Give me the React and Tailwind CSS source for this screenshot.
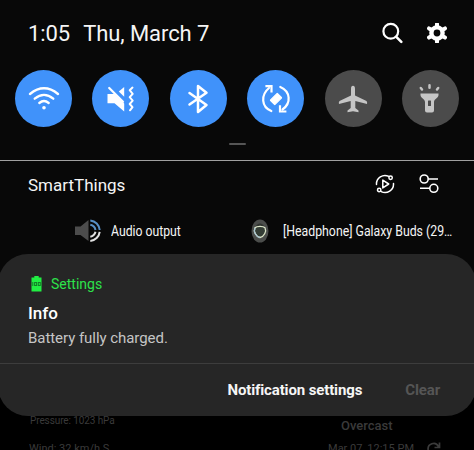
const WifiIcon = () => (
  <svg width="32" height="26" viewBox="0 0 32 26" fill="none" stroke="white" strokeWidth="2.3" strokeLinecap="round">
    <path d="M2 8Q16 -3.4 30 8" />
    <path d="M6.7 12.7Q16 5 25.3 12.7" />
    <path d="M11.3 17Q16 13 20.7 17" />
    <circle cx="16" cy="21.7" r="1.8" fill="white" stroke="none" />
  </svg>
)

const VibrateIcon = () => (
  <svg width="30" height="28" viewBox="0 0 30 28" fill="none">
    <path d="M1.5 9H8.5L18.2 18.6V26.4L8.5 18.2H1.5Z" fill="white" />
    <path d="M12.8 6.6L18.2 2V11.8Z" fill="white" />
    <path d="M3.2 3L17 16.8" stroke="white" strokeWidth="2.2" strokeLinecap="round" />
    <path d="M26.5 2.6L23.7 5.2L26.7 8.8L23.7 12.2L26.7 15.6L23.7 19L26.5 22.2L24 25.3" stroke="white" strokeWidth="2" strokeLinecap="round" strokeLinejoin="round" />
  </svg>
)

const BluetoothIcon = () => (
  <svg width="22" height="30" viewBox="0 0 22 30" fill="none" stroke="white" strokeWidth="2.5" strokeLinecap="round" strokeLinejoin="round">
    <path d="M2.500 9L19.500 21L11 28V2L19.500 8.700L2.500 20.500" />
  </svg>
)

const RotateIcon = () => (
  <svg width="30" height="30" viewBox="0 0 30 30" fill="none" stroke="white" strokeWidth="2.200">
    <path d="M10.300 27C.2 23 -.4 11 8 4" strokeLinecap="round" />
    <path d="M19.300 3C29.500 7.500 30.500 19 21.500 25.500" strokeLinecap="round" />
    <path d="M5.500 2.200H10.500V7.500M24.300 27.500H19V22.300" strokeLinecap="square" />
    <rect x="10" y="11.800" width="10" height="6.400" rx=".5" transform="rotate(-45 15 15)" fill="white" strokeWidth="1" />
  </svg>
)

const PlaneIcon = () => (
  <svg width="30" height="28" viewBox="0 0 30 28" fill="#c5c5c5">
    <path d="M15 .8C16.3 .8 17 2 17 4V10.5L28 15.8C29 16.4 29.4 17.2 29 19L17.3 16V23L20.5 25.5V27.2L15 26.3L9.5 27.2V25.5L12.7 23V16L1 19C.6 17.2 1 16.4 2 15.8L13 10.5V4C13 2 13.7 .8 15 .8Z" />
  </svg>
)

const TorchIcon = () => (
  <svg width="22" height="30" viewBox="0 0 22 30" fill="none">
    <path d="M1.500 9.500H19.500V11C19.500 14 15 15 15 18V26.500Q15 28.500 13 28.500H8Q6 28.500 6 26.500V18C6 15 1.500 14 1.500 11Z" fill="#c5c5c5" />
    <rect x="9" y="16.500" width="3" height="5.500" rx=".5" fill="#4b4b4b" />
    <path d="M10.500 1.300V3.800M1.800 4L3 5.500M19.200 4L18 5.500" stroke="#c5c5c5" strokeWidth="2.500" strokeLinecap="round" />
  </svg>
)

const toggles = [
  { name: 'Wi-Fi', icon: WifiIcon, active: true },
  { name: 'Vibrate', icon: VibrateIcon, active: true },
  { name: 'Bluetooth', icon: BluetoothIcon, active: true },
  { name: 'Auto rotate', icon: RotateIcon, active: true },
  { name: 'Airplane mode', icon: PlaneIcon, active: false },
  { name: 'Flashlight', icon: TorchIcon, active: false },
]

const SearchIcon = () => (
  <svg width="22" height="22" viewBox="0 0 22 22" fill="none" stroke="white">
    <circle cx="9.800" cy="9.300" r="7.400" strokeWidth="2.200" />
    <path d="M15.300 14.800L20.300 19.800" strokeWidth="2.600" strokeLinecap="round" />
  </svg>
)

const GearIcon = () => (
  <svg width="20" height="20" viewBox="0 0 20 20" fill="none" stroke="white">
    <circle cx="10" cy="10" r="5.600" strokeWidth="4.400" />
    <path
      d="M10 1V4M10 16V19M2 5.400L4.800 7M15.200 13L18 14.600M2 14.600L4.800 13M15.200 7L18 5.400"
      strokeWidth="4"
      strokeLinecap="round"
    />
  </svg>
)

const MediaIcon = () => (
  <svg width="20" height="20" viewBox="0 0 20 20" fill="none" stroke="white" strokeWidth="1.5">
    <path d="M1.5 10.5A8.5 8.5 0 0 1 13.8 2.4M18.5 9.5A8.5 8.5 0 0 1 6.2 17.6" strokeLinecap="round" />
    <circle cx="15.6" cy="3.8" r="1.7" />
    <circle cx="4.2" cy="16" r="1.7" />
    <path d="M7.8 6.1V13.9L13.7 10Z" strokeLinejoin="round" />
  </svg>
)

const DevicesIcon = () => (
  <svg width="20" height="20" viewBox="0 0 20 20" fill="none" stroke="white" strokeWidth="1.6">
    <circle cx="5.2" cy="5" r="4" />
    <circle cx="14.8" cy="14.3" r="4" />
    <path d="M9.2 5H19M1 14.3H10.8" />
  </svg>
)

const SpeakerIcon = () => (
  <svg width="26" height="24" viewBox="0 0 26 24" fill="none">
    <path d="M0 7.5H5.5L13.5 1V22L5.5 16H0Z" fill="#4c4c4c" />
    <path d="M15.3 5.7A6.5 6.5 0 0 1 20.5 11M15.3 1.4A10.5 10.5 0 0 1 24.7 11" stroke="#568fc5" strokeWidth="2" />
    <path d="M15.3 17.7A6.5 6.5 0 0 0 20.5 12.8M15.3 22A10.5 10.5 0 0 0 24.7 12.8" stroke="#e2e2e2" strokeWidth="2" />
  </svg>
)

const BudsIcon = () => (
  <svg width="18" height="24" viewBox="0 0 18 24" fill="none">
    <ellipse cx="9" cy="12" rx="8.500" ry="11.500" fill="#4b4d4b" />
    <path d="M5 7C6.500 3.500 11.500 3.500 13 7Z" fill="#303430" />
    <path d="M4 8.800C6 7 12 7 14 8.800C15.800 12.500 13 17.800 9 18.500C5 17.800 2.200 12.500 4 8.800Z" fill="#343d35" stroke="#dce6c9" strokeWidth="1.300" />
    <path d="M4 8.800C2.200 12.500 5 17.800 9 18.500" stroke="#a9c5d0" strokeWidth="1.300" />
  </svg>
)

const BatteryIcon = () => (
  <svg width="11" height="16" viewBox="0 0 11 16">
    <path d="M3.300 0H7.700V1.500H10.500V15.500H.5V1.500H3.300Z" fill="#21ef43" />
    <g fill="none" stroke="#167c29">
      <path d="M1.800 6V10" />
      <rect x="3.600" y="6.500" width="2" height="3" />
      <rect x="7.300" y="6.500" width="2" height="3" />
    </g>
  </svg>
)

const RefreshIcon = () => (
  <svg width="14" height="14" viewBox="0 0 14 14" fill="none" stroke="#3b3b3b" strokeWidth="1.700">
    <path d="M1.200 8A5.500 5.500 0 0 1 11.500 4.500M12.500 .5V5.500H7.500" />
  </svg>
)

export default function App() {
  return (
    <div className="flex h-[450px] w-[474px] flex-col overflow-hidden bg-[#080808] font-['Roboto',sans-serif] whitespace-nowrap text-[#f5f5f5]">
      <header className="flex h-[66px] shrink-0 items-center justify-between pr-[27px] pl-7">
        <div className="flex gap-[13px] pt-[2px] text-[22px] leading-[26px] tracking-[-0.07px]">
          <span>1:05</span>
          <span>Thu, March 7</span>
        </div>
        <div className="flex items-center gap-[24px]">
          <SearchIcon />
          <GearIcon />
        </div>
      </header>

      <div className="mt-[4px] flex shrink-0 justify-between px-[15px]">
        {toggles.map(({ name, icon: Icon, active }) => (
          <button
            key={name}
            aria-label={name}
            className={`flex size-[57px] items-center justify-center rounded-full ${active ? 'bg-[#4092fa]' : 'bg-[#4b4b4b]'}`}
          >
            <Icon />
          </button>
        ))}
      </div>
      <div className="mx-auto mt-4 h-[2px] w-[17px] shrink-0 rounded-full bg-[#555]" />

      {/* SmartThings */}
      <section className="mt-[15px] h-[94px] shrink-0 border-t border-[#a0a0a0]">
        <div className="flex h-[46px] items-center justify-between pr-[35px] pl-7">
          <h2 className="pt-px text-[17px] leading-5">SmartThings</h2>
          <div className="flex gap-6">
            <MediaIcon />
            <DevicesIcon />
          </div>
        </div>
        <div className="flex h-12 items-center pl-[75px]">
          <div className="flex w-[176px] shrink-0 items-center gap-[10px]">
            <SpeakerIcon />
            <span className="origin-left scale-x-[0.815] text-[15px]">Audio output</span>
          </div>
          <div className="flex shrink-0 items-center gap-[14px]">
            <BudsIcon />
            <span className="origin-left scale-x-[0.82] text-[15px]">[Headphone] Galaxy Buds (29…</span>
          </div>
        </div>
      </section>

      {/* Notification over the dimmed home screen */}
      <div className="h-[196px] shrink-0 bg-gradient-to-b from-[#080808] from-50% to-black to-60%">
        <article className="-mx-[2px] flex h-[162px] flex-col rounded-[30px] bg-[#262626]">
          <div className="h-[110px] border-b border-[#3d3d3d] pt-[20px] pl-[30px]">
            <div className="flex h-5 items-center gap-[9px] pl-[3px] text-[14px] text-[#2de24b]">
              <BatteryIcon />
              <span>Settings</span>
            </div>
            <h3 className="mt-[8px] text-[17px] leading-[22px] font-medium text-white">Info</h3>
            <p className="mt-[4px] text-[15px] leading-5 tracking-[-0.05px] text-[#c5c5c5]">Battery fully charged.</p>
          </div>
          <div className="flex flex-1 items-center justify-end gap-[43px] pt-px pr-9 text-[15px] font-bold tracking-[-0.13px]">
            <button>Notification settings</button>
            <button className="text-[#555]">Clear</button>
          </div>
        </article>
        <div className="flex h-[34px] justify-between overflow-hidden pr-[33px] pl-[30px] text-[#3a3a3a]">
          <div className="text-[10px] leading-[28px]">
            <p className="-mt-[9px] tracking-[-0.1px]">Pressure: 1023 hPa</p>
            <p className="-ml-px text-[11px]">Wind: 32 km/h S</p>
          </div>
          <div className="flex flex-col">
            <p className="mt-[1px] ml-[13px] text-[13px] leading-[18px] font-medium">Overcast</p>
            <div className="mt-[5px] flex items-center gap-[13px] text-[11px] leading-[18px]">
              <span>Mar 07, 12:15 PM</span>
              <RefreshIcon />
            </div>
          </div>
        </div>
      </div>
    </div>
  )
}
